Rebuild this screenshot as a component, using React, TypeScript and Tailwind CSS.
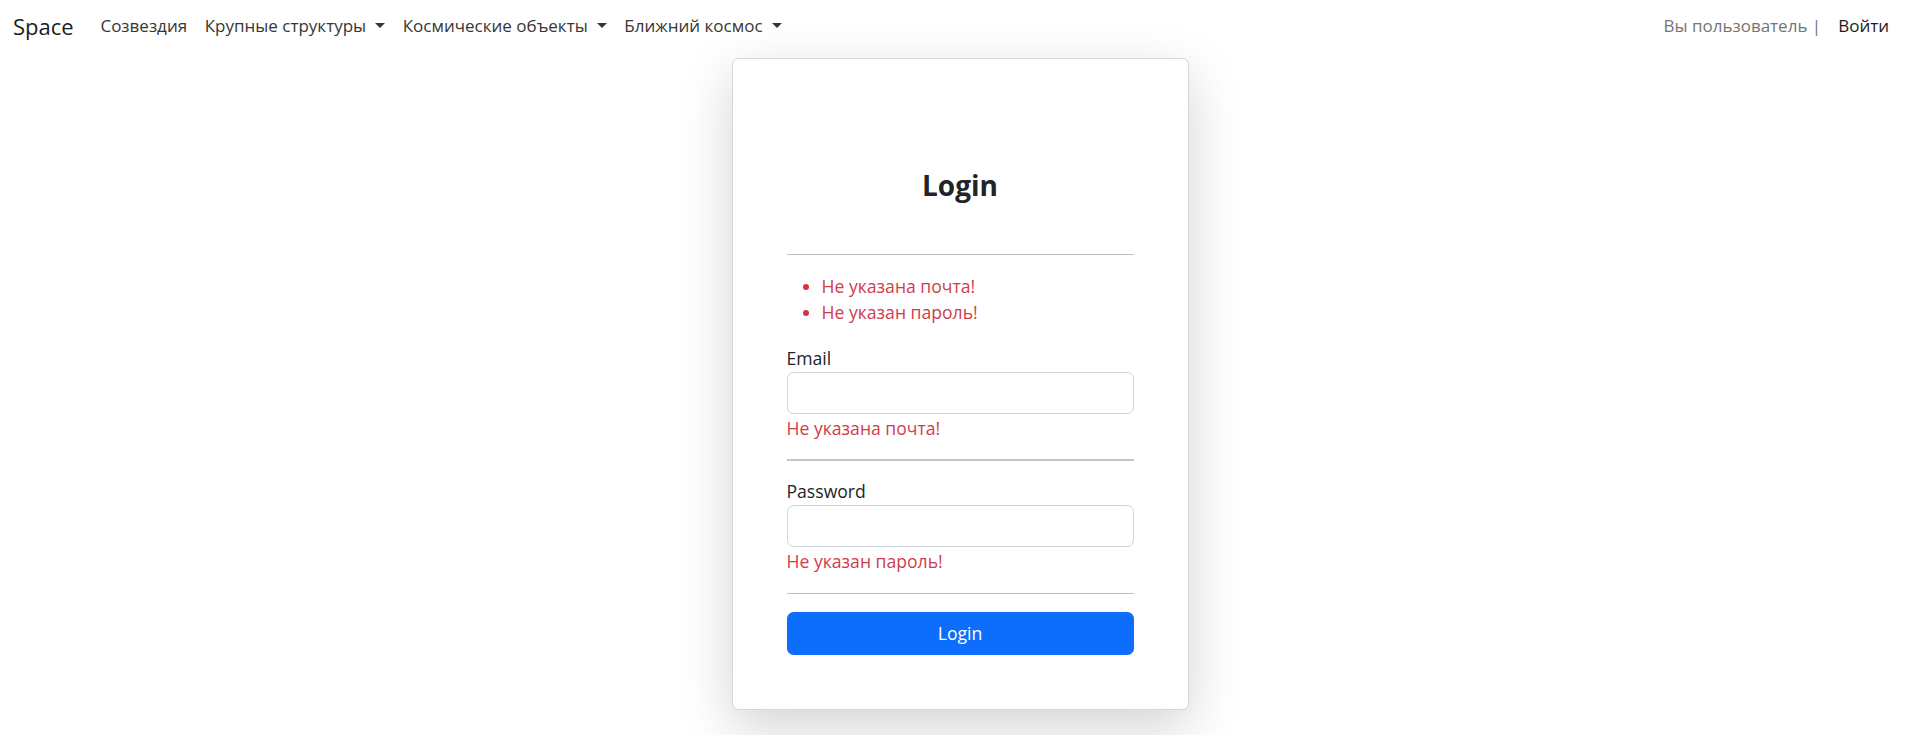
import React from 'react'

const Caret = () => (
  <span className="ml-[9px] inline-block h-0 w-0 translate-y-[-2px] border-x-[5px] border-t-[5.5px] border-x-transparent border-t-current align-middle" />
)

const NavLink = ({ text, dropdown }: { text: string; dropdown?: boolean }) => (
  <a href="#" className="px-[8.8px] text-[17px] leading-[26.4px] text-[#363636]">
    {text}
    {dropdown && <Caret />}
  </a>
)

const Field = ({ label, error, type }: { label: string; error: string; type: string }) => (
  <div className="flex flex-col">
    <label className="text-[17.6px] leading-[26.4px] text-[#212529]">{label}</label>
    <input
      type={type}
      className="h-[42px] w-full rounded-[6.6px] border border-[#ced4da] bg-white px-[13px] outline-none"
    />
    <div className="mt-px text-[17.6px] leading-[26.4px] text-[#cf3d4b]">{error}</div>
  </div>
)

export default function App() {
  const errors = ['Не указана почта!', 'Не указан пароль!']

  return (
    <div className="min-h-[735px] bg-white font-['Open_Sans',sans-serif] text-[#212529]">
      {/* navbar */}
      <nav className="flex h-[53px] items-center justify-between px-[13px]">
        <div className="flex items-center">
          <a href="#" className="mr-[18px] text-[22px] leading-[33px] text-[#1c1c1c]">Space</a>
          <NavLink text="Созвездия" />
          <NavLink text="Крупные структуры" dropdown />
          <NavLink text="Космические объекты" dropdown />
          <NavLink text="Ближний космос" dropdown />
        </div>
        <div className="flex items-center pr-[18px]">
          <span className="text-[17px] leading-[26.4px] text-[#757575]">Вы пользователь |</span>
          <a href="#" className="pl-[17px] text-[17px] leading-[26.4px] text-[#1c1c1c]">Войти</a>
        </div>
      </nav>

      {/* login card */}
      <div className="mx-auto mt-[5px] w-[457px] rounded-[6.6px] border border-[#d6d6d6] bg-white px-[54px] pt-[110px] pb-[54px] shadow-[0_17.6px_52.8px_rgba(0,0,0,0.175)]">
        <h3 className="text-center text-[28px] leading-[33.6px] font-bold text-[#212529]">Login</h3>
        <hr className="mt-[51px] mb-[18px] border-t border-[#bfbfbf]" />

        <ul className="list-disc pl-[35px] text-[17.6px] leading-[26.4px] text-[#cf3d4b] marker:text-[#d6303f]">
          {errors.map((e) => (
            <li key={e}>{e}</li>
          ))}
        </ul>

        <div className="mt-[20px]">
          <Field label="Email" error="Не указана почта!" type="email" />
        </div>
        <hr className="my-[17.6px] border-t-2 border-[#c4c4c4]" />
        <Field label="Password" error="Не указан пароль!" type="password" />
        <hr className="mt-[18.6px] mb-[18px] border-t border-[#bfbfbf]" />

        <button className="h-[43px] w-full rounded-[6.6px] bg-[#0d6efd] text-[17.6px] text-white">Login</button>
      </div>
    </div>
  )
}
